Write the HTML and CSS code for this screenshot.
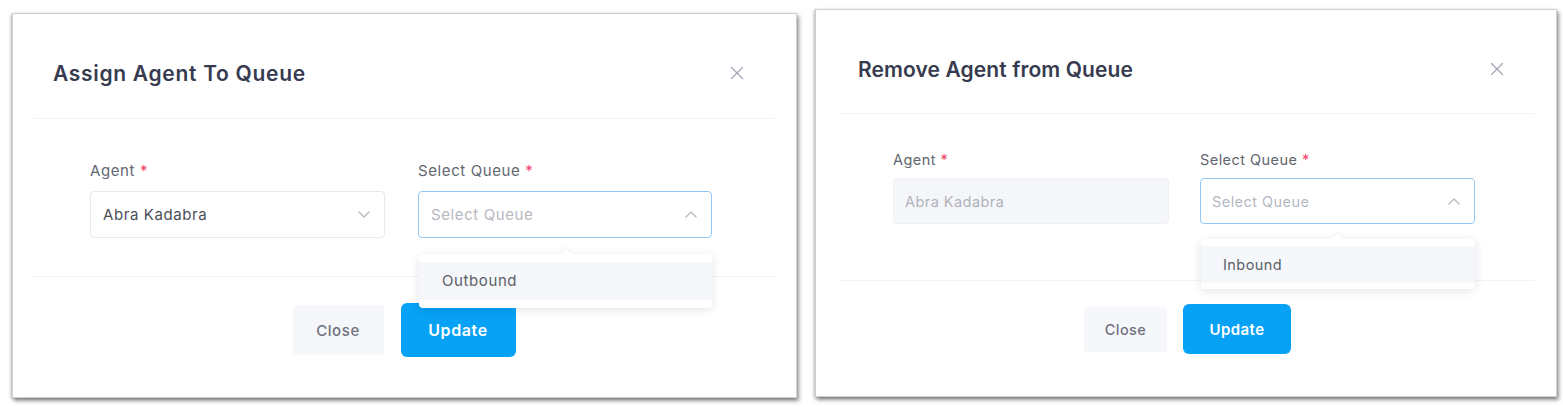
FILE: index.html
```html
<!DOCTYPE html>
<html lang="en">
<head>
<meta charset="utf-8">
<title>Agent Queue Modals</title>
<link rel="stylesheet" href="styles.css">
</head>
<body>
<div class="canvas">
  <section class="modal modal--assign">
    <header class="modal-header">
      <h2 class="modal-title">Assign Agent To Queue</h2>
      <button class="modal-close" aria-label="Close">
        <svg viewBox="0 0 14 14" width="14" height="14"><path d="M1.5 1.5 L12.5 12.5 M12.5 1.5 L1.5 12.5" stroke="currentColor" stroke-width="1.4" stroke-linecap="round" fill="none"/></svg>
      </button>
    </header>
    <div class="modal-body">
      <div class="field">
        <label class="field-label">Agent <span class="req">*</span></label>
        <div class="select">
          <span class="select-value">Abra Kadabra</span>
          <svg class="chev" viewBox="0 0 12 7" width="12" height="7"><path d="M1 1 L6 6 L11 1" stroke="currentColor" stroke-width="1.2" fill="none" stroke-linecap="round" stroke-linejoin="round"/></svg>
        </div>
      </div>
      <div class="field">
        <label class="field-label">Select Queue <span class="req">*</span></label>
        <div class="select select--focus">
          <span class="select-placeholder">Select Queue</span>
          <svg class="chev" viewBox="0 0 12 7" width="12" height="7"><path d="M1 6 L6 1 L11 6" stroke="currentColor" stroke-width="1.2" fill="none" stroke-linecap="round" stroke-linejoin="round"/></svg>
        </div>
        <div class="dropdown">
          <span class="dropdown-arrow"></span>
          <div class="dropdown-option">Outbound</div>
        </div>
      </div>
    </div>
    <footer class="modal-footer">
      <button class="btn btn-light">Close</button>
      <button class="btn btn-primary">Update</button>
    </footer>
  </section>

  <section class="modal modal--remove">
    <header class="modal-header">
      <h2 class="modal-title">Remove Agent from Queue</h2>
      <button class="modal-close" aria-label="Close">
        <svg viewBox="0 0 14 14" width="14" height="14"><path d="M1.5 1.5 L12.5 12.5 M12.5 1.5 L1.5 12.5" stroke="currentColor" stroke-width="1.4" stroke-linecap="round" fill="none"/></svg>
      </button>
    </header>
    <div class="modal-body">
      <div class="field">
        <label class="field-label">Agent <span class="req">*</span></label>
        <div class="select select--disabled">
          <span class="select-value">Abra Kadabra</span>
        </div>
      </div>
      <div class="field">
        <label class="field-label">Select Queue <span class="req">*</span></label>
        <div class="select select--focus">
          <span class="select-placeholder">Select Queue</span>
          <svg class="chev" viewBox="0 0 12 7" width="12" height="7"><path d="M1 6 L6 1 L11 6" stroke="currentColor" stroke-width="1.2" fill="none" stroke-linecap="round" stroke-linejoin="round"/></svg>
        </div>
        <div class="dropdown">
          <span class="dropdown-arrow"></span>
          <div class="dropdown-option">Inbound</div>
        </div>
      </div>
    </div>
    <footer class="modal-footer">
      <button class="btn btn-light">Close</button>
      <button class="btn btn-primary">Update</button>
    </footer>
  </section>
</div>
</body>
</html>
```
FILE: styles.css
```css
* { box-sizing: border-box; }

html, body {
  margin: 0;
  padding: 0;
  background: #ffffff;
}

body {
  font-family: Inter, "Noto Sans", "Liberation Sans", sans-serif;
  color: #3a3e50;
}

.canvas {
  display: flex;
  align-items: flex-start;
  width: 1563px;
  height: 407px;
}

.modal {
  background: #ffffff;
  border: 1px solid #cfcfcf;
  box-shadow: 2px 3px 4px rgba(0, 0, 0, 0.4), -1px 1px 3px rgba(0, 0, 0, 0.25);
  display: flex;
  flex-direction: column;
}

.modal--assign {
  margin: 13px 0 0 12px;
  width: 785px;
  height: 385px;
  padding: 0 21px 0 20px;
  letter-spacing: 0.6px;
}

.modal--remove {
  margin: 9px 0 0 18px;
  width: 742px;
  height: 388px;
  padding: 0 21px 0 24px;
  letter-spacing: 0.45px;
}

/* header */
.modal-header {
  display: flex;
  align-items: center;
  justify-content: space-between;
  border-bottom: 1px solid #f2f3f7;
}

.modal--assign .modal-header { height: 105px; padding: 14px 31px 0 20px; }
.modal--remove .modal-header { height: 104px; padding: 15px 31px 0 18px; }

.modal-title {
  margin: 0;
  font-weight: 600;
  color: #373b50;
}
.modal--assign .modal-title { font-size: 21px; letter-spacing: 0.7px; }
.modal--remove .modal-title { font-size: 21px; letter-spacing: 0.1px; }

.modal-close {
  border: 0;
  background: transparent;
  padding: 0;
  color: #a4a8b8;
  display: flex;
  cursor: pointer;
}

/* body */
.modal-body {
  display: grid;
  border-bottom: 1px solid #f2f3f7;
}
.modal--assign .modal-body {
  grid-template-columns: 295px 294px;
  column-gap: 33px;
  padding: 42px 0 38px 57px;
}
.modal--remove .modal-body {
  grid-template-columns: 276px 275px;
  column-gap: 31px;
  padding: 36px 0 56px 53px;
}

.field {
  position: relative;
  display: flex;
  flex-direction: column;
}

.field-label {
  color: #62666f;
  line-height: 20px;
}
.modal--assign .field-label { font-size: 15px; margin-bottom: 10px; }
.modal--remove .field-label { font-size: 14.5px; margin-bottom: 8px; }

.req { color: #f0436a; }

.select {
  display: flex;
  align-items: center;
  justify-content: space-between;
  border: 1px solid #e6e8ef;
  border-radius: 4px;
  background: #ffffff;
}
.modal--assign .select { height: 47px; padding: 0 14px 0 12px; font-size: 15px; }
.modal--remove .select { height: 46px; padding: 0 14px 0 11px; font-size: 14.5px; }

.select--focus {
  border: 1.5px solid #93c8f6;
}

.select--disabled {
  background: #f5f6fa;
  border-color: #eef0f5;
}

.select-value { color: #4b4f58; }
.select--disabled .select-value { color: #b0b3bb; }
.select-placeholder { color: #b5b8bf; }

.chev { color: #b3b6bd; }

/* dropdown */
.dropdown {
  position: absolute;
  left: 1px;
  right: 0;
  background: #ffffff;
  border-radius: 4px;
  box-shadow: 0 2px 10px rgba(30, 40, 70, 0.12);
  padding: 8px 0;
  z-index: 5;
}
.modal--assign .dropdown { top: 93px; }
.modal--remove .dropdown { top: 89px; padding: 7px 0 6px; }

.dropdown-arrow {
  position: absolute;
  top: -6px;
  left: 50%;
  width: 0;
  height: 0;
  margin-left: -6px;
  border-left: 6px solid transparent;
  border-right: 6px solid transparent;
  border-bottom: 6px solid #ffffff;
  filter: drop-shadow(0 -1px 1px rgba(30, 40, 70, 0.08));
}

.dropdown-option {
  background: #f5f7fa;
  color: #5b5f68;
}
.modal--assign .dropdown-option { height: 38px; line-height: 38px; padding-left: 23px; font-size: 15px; }
.modal--remove .dropdown-option { height: 37px; line-height: 37px; padding-left: 22px; font-size: 14.5px; }

/* footer */
.modal-footer {
  display: flex;
  justify-content: center;
  align-items: center;
}
.modal--assign .modal-footer { gap: 17px; padding-top: 26px; }
.modal--remove .modal-footer { gap: 16px; padding-top: 23px; }

.btn {
  border: 0;
  font-family: inherit;
  font-weight: 500;
  letter-spacing: inherit;
  cursor: pointer;
}

.btn-light {
  background: #f5f7fa;
  color: #6e717d;
  border-radius: 4px;
}
.modal--assign .btn-light { width: 91px; height: 50px; font-size: 15px; }
.modal--remove .btn-light { width: 83px; height: 45px; font-size: 14.5px; }

.btn-primary {
  background: #07a1f5;
  color: #ffffff;
  font-weight: 600;
  border-radius: 6px;
}
.modal--assign .btn-primary { width: 115px; height: 54px; font-size: 16px; }
.modal--remove .btn-primary { width: 108px; height: 50px; font-size: 15px; }
```
